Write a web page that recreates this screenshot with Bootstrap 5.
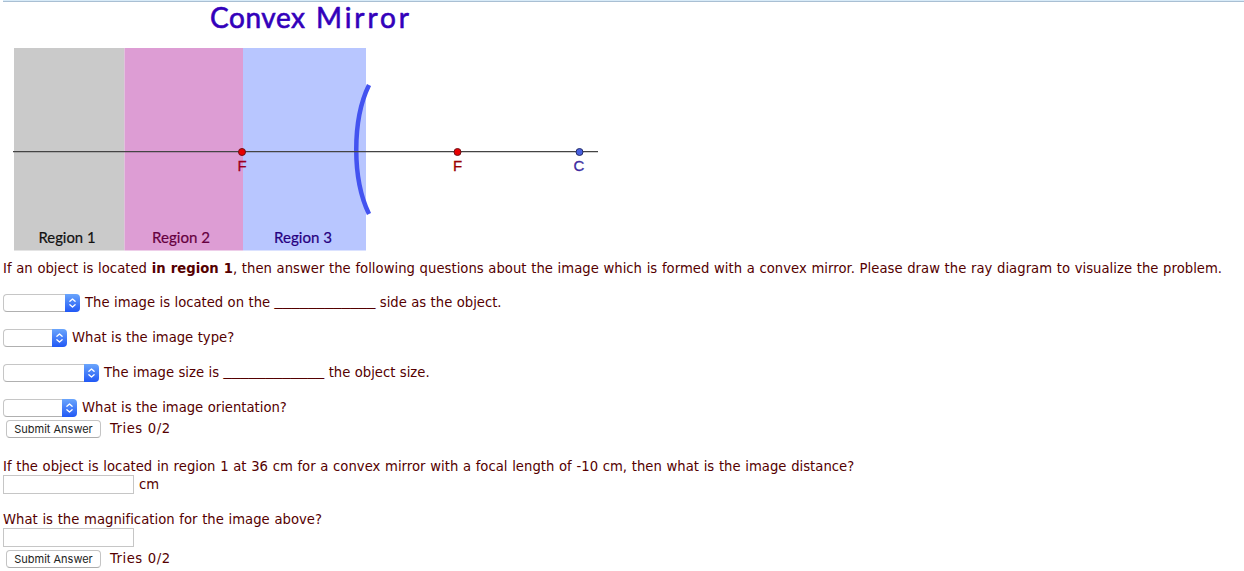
<!DOCTYPE html>
<html lang="en">
<head>
  <meta charset="UTF-8" />
  <title>Convex Mirror</title>
  <meta name="viewport" content="width=device-width, initial-scale=1" />
  <link href="https://cdn.jsdelivr.net/npm/bootstrap@5.3.3/dist/css/bootstrap.min.css" rel="stylesheet" />
  <style>
    body {
      font-family: Verdana, "DejaVu Sans", sans-serif;
      font-size: 13.2px;
      line-height: 18px;
      letter-spacing: 0.03px;
      word-spacing: 0.42px;
      color: #550000;
      background-color: #fff;
      overflow: hidden;
    }

    .top-rule {
      height: 2px;
      margin-left: 3px;
      background-color: #d8ebf8;
      border-bottom: 1px solid #a9bfd3;
    }

    .problem {
      padding-left: 3px;
    }

    .diagram {
      width: 600px;
      height: 258px;
      margin-left: -3px;
      overflow: visible;
      letter-spacing: 0;
      word-spacing: 0;
    }

    .comic {
      font-family: "Comic Sans MS", Lato, sans-serif;
    }

    .pt-label {
      font-family: "Liberation Sans", Arial, sans-serif;
      font-size: 15px;
    }

    .question {
      height: 18px;
      white-space: nowrap;
    }

    .choice-list {
      margin-top: 16px;
      gap: 17px;
    }

    .choice {
      height: 18px;
      white-space: pre;
      letter-spacing: 0;
      word-spacing: 0.25px;
    }

    .picker {
      height: 18px;
      margin-right: 5px;
    }

    .picker .form-select {
      height: 18px;
      min-height: 0;
      padding: 0;
      background-image: none;
      border: 1px solid #c6c6c6;
      border-bottom-color: #b0b0b0;
      border-right: 0;
      border-radius: 4px 0 0 4px;
    }

    .picker svg {
      width: 15px;
      height: 18px;
      flex-shrink: 0;
    }

    .w-side { width: 77px; }
    .w-type { width: 64px; }
    .w-size { width: 96px; }
    .w-orient { width: 74px; }

    .blank {
      font-family: "Liberation Sans", Arial, sans-serif;
      font-size: 15.1px;
      line-height: 16px;
      padding-bottom: 4px;
    }

    .submit-row {
      height: 18px;
      margin: 3px 0 0 3px;
      gap: 9px;
    }

    .submit-row .btn {
      width: 95px;
      height: 18px;
      padding: 0;
      font-family: Inter, sans-serif;
      font-size: 11px;
      line-height: 16px;
      letter-spacing: 0;
      word-spacing: 0;
      color: #222;
      background-color: #fff;
      border: 1px solid #c4c4c4;
      border-bottom-color: #adadad;
      border-radius: 4px;
    }

    .tries {
      letter-spacing: 0.5px;
    }

    .second-part {
      margin-top: 20px;
      margin-bottom: -1px;
    }

    .third-part {
      margin-top: 17px;
      margin-bottom: -1px;
    }

    .answer {
      width: 131px;
      height: 19px;
      min-height: 0;
      padding: 0 2px;
      border: 1px solid #c6c6c6;
      border-radius: 0;
    }

    .unit {
      margin-left: 5px;
    }
  </style>
</head>
<body>

  <div class="top-rule"></div>
  <main class="problem">

    <svg class="diagram d-block" viewBox="0 2 600 258">
      <defs>
        <!-- blue cap of the pickers below -->
        <linearGradient id="capFill" x1="0" y1="0" x2="0" y2="1">
          <stop offset="0" stop-color="#6aa5fc" />
          <stop offset="1" stop-color="#2158f5" />
        </linearGradient>
      </defs>
      <rect x="14" y="48" width="110.500" height="202.500" fill="#cacaca" />
      <rect x="124.500" y="48" width="118.500" height="202.500" fill="#dd9dd4" />
      <rect x="243" y="48" width="123" height="202.500" fill="#b8c6ff" />
      <g class="comic" font-size="28" fill="#3300bb" stroke="#3300bb" stroke-width="0.600">
        <text x="210" y="27.500" textLength="95" lengthAdjust="spacing">Convex</text>
        <text x="316" y="27.500" textLength="93" lengthAdjust="spacing">Mirror</text>
      </g>
      <path d="M369 85 C352 120 352 179 369 214" fill="none" stroke="#4353f0" stroke-width="4.500" />
      <path d="M13 151.700 H598" stroke="#444" stroke-width="1.200" />
      <circle cx="242" cy="152" r="3.500" fill="#e80000" stroke="#701018" />
      <circle cx="457.500" cy="152" r="3.500" fill="#e80000" stroke="#701018" />
      <circle cx="579.500" cy="152" r="3.500" fill="#4860e0" stroke="#252d68" />
      <g class="pt-label" text-anchor="middle" stroke-width="0.300">
        <text x="242" y="171" fill="#990022" stroke="#990022">F</text>
        <text x="457.500" y="171" fill="#990000" stroke="#990000">F</text>
        <text x="579" y="171" fill="#3d2ba0" stroke="#3d2ba0">C</text>
      </g>
      <g class="comic" font-size="16" stroke-width="0.200">
        <text x="38.500" y="243" fill="#111" stroke="#111" textLength="57" lengthAdjust="spacingAndGlyphs">Region 1</text>
        <text x="152" y="243" fill="#66003f" stroke="#66003f" textLength="58" lengthAdjust="spacingAndGlyphs">Region 2</text>
        <text x="274" y="243" fill="#260080" stroke="#260080" textLength="58" lengthAdjust="spacingAndGlyphs">Region 3</text>
      </g>
    </svg>

    <div class="question">If an object is located <b>in region 1</b>, then answer the following questions about the image which is formed with a convex mirror. Please draw the ray diagram to visualize the problem.</div>

    <div class="choice-list d-flex flex-column">
      <div class="choice d-flex align-items-center">
        <div class="picker w-side d-flex">
          <select class="form-select" aria-label="Side"><option></option></select>
          <svg viewBox="0 0 15 18"><path d="M0 0H11a4 4 0 0 1 4 4V14a4 4 0 0 1-4 4H0z" fill="url(#capFill)" /><path d="M4.900 7.300L7.500 4.900L10.100 7.300M4.900 10.700L7.500 13.100L10.100 10.700" fill="none" stroke="#fff" stroke-width="1.300" stroke-linecap="round" stroke-linejoin="round" /></svg>
        </div><span>The image is located on the </span><span class="blank">____________</span><span> side as the object.</span>
      </div>
      <div class="choice d-flex align-items-center">
        <div class="picker w-type d-flex">
          <select class="form-select" aria-label="Type"><option></option></select>
          <svg viewBox="0 0 15 18"><path d="M0 0H11a4 4 0 0 1 4 4V14a4 4 0 0 1-4 4H0z" fill="url(#capFill)" /><path d="M4.900 7.300L7.500 4.900L10.100 7.300M4.900 10.700L7.500 13.100L10.100 10.700" fill="none" stroke="#fff" stroke-width="1.300" stroke-linecap="round" stroke-linejoin="round" /></svg>
        </div><span>What is the image type?</span>
      </div>
      <div class="choice d-flex align-items-center">
        <div class="picker w-size d-flex">
          <select class="form-select" aria-label="Size"><option></option></select>
          <svg viewBox="0 0 15 18"><path d="M0 0H11a4 4 0 0 1 4 4V14a4 4 0 0 1-4 4H0z" fill="url(#capFill)" /><path d="M4.900 7.300L7.500 4.900L10.100 7.300M4.900 10.700L7.500 13.100L10.100 10.700" fill="none" stroke="#fff" stroke-width="1.300" stroke-linecap="round" stroke-linejoin="round" /></svg>
        </div><span>The image size is </span><span class="blank">____________</span><span> the object size.</span>
      </div>
      <div class="choice d-flex align-items-center">
        <div class="picker w-orient d-flex">
          <select class="form-select" aria-label="Orientation"><option></option></select>
          <svg viewBox="0 0 15 18"><path d="M0 0H11a4 4 0 0 1 4 4V14a4 4 0 0 1-4 4H0z" fill="url(#capFill)" /><path d="M4.900 7.300L7.500 4.900L10.100 7.300M4.900 10.700L7.500 13.100L10.100 10.700" fill="none" stroke="#fff" stroke-width="1.300" stroke-linecap="round" stroke-linejoin="round" /></svg>
        </div><span>What is the image orientation?</span>
      </div>
    </div>
    <div class="submit-row d-flex align-items-center">
      <button type="button" class="btn">Submit Answer</button>
      <span class="tries">Tries 0/2</span>
    </div>

    <div class="question second-part">If the object is located in region 1 at 36 cm for a convex mirror with a focal length of -10 cm, then what is the image distance?</div>
    <div class="d-flex align-items-center">
      <input type="text" class="form-control answer" aria-label="Image distance">
      <span class="unit">cm</span>
    </div>

    <div class="question third-part">What is the magnification for the image above?</div>
    <input type="text" class="form-control answer" aria-label="Magnification">
    <div class="submit-row d-flex align-items-center">
      <button type="button" class="btn">Submit Answer</button>
      <span class="tries">Tries 0/2</span>
    </div>
  </main>

  <script src="https://cdn.jsdelivr.net/npm/bootstrap@5.3.3/dist/js/bootstrap.bundle.min.js"></script>
</body>
</html>
